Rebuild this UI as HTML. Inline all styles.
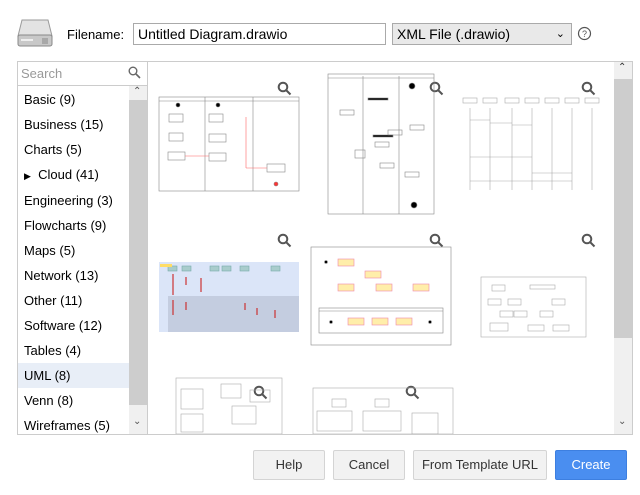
<!DOCTYPE html>
<html><head><style>
*{box-sizing:border-box;margin:0;padding:0}
body{width:640px;height:495px;background:#fff;font-family:"Liberation Sans",sans-serif;font-size:13px;color:#000;position:relative;overflow:hidden}
.a{position:absolute}
.btn{position:absolute;top:450px;height:30px;border:1px solid #d4d4d4;background:#f2f2f2;border-radius:2px;text-align:center;line-height:28px;font-size:13px;color:#333}
.li{position:absolute;left:24px;font-size:13px;color:#000}
</style></head><body>
<svg class="a" style="left:17px;top:18px" width="36" height="30" viewBox="0 0 36 30">
<path d="M5 2 H31 L35 18 H1 Z" fill="#e3e3e3" stroke="#9a9a9a"/>
<rect x="1" y="17" width="34" height="11" rx="2" fill="#c8c8c8" stroke="#888"/>
<rect x="4" y="21" width="12" height="2" fill="#eee"/>
<g stroke="#888"><line x1="26" y1="20" x2="26" y2="26"/><line x1="28" y1="20" x2="28" y2="26"/><line x1="30" y1="20" x2="30" y2="26"/></g>
</svg>
<div class="a" style="left:67px;top:27px">Filename:</div>
<div class="a" style="left:133px;top:23px;width:253px;height:22px;border:1px solid #aaa;padding-left:4px;line-height:20px;font-size:14px">Untitled Diagram.drawio</div>
<div class="a" style="left:392px;top:23px;width:180px;height:22px;border:1px solid #aaa;background:#e9e9e9;padding-left:4px;line-height:20px;font-size:14px">XML File (.drawio)<span style="position:absolute;right:6px;top:0;font-size:11px">&#8964;</span></div>
<svg class="a" style="left:577px;top:26px" width="15" height="15" viewBox="0 0 15 15"><circle cx="7.5" cy="7.5" r="6" fill="none" stroke="#555" stroke-width="1.2"/><text x="7.5" y="11" font-size="9" text-anchor="middle" fill="#555" font-family="Liberation Sans">?</text></svg>

<div class="a" style="left:17px;top:61px;width:616px;height:374px;border:1px solid #ccc"></div>
<div class="a" style="left:147px;top:61px;width:1px;height:374px;background:#ccc"></div>
<div class="a" style="left:18px;top:85px;width:129px;height:1px;background:#ccc"></div>
<div class="a" style="left:21px;top:66px;color:#999">Search</div>
<svg class="a" style="left:128px;top:66px" width="13" height="13" viewBox="0 0 13 13"><circle cx="5" cy="5" r="3.8" fill="none" stroke="#666" stroke-width="1.4"/><line x1="8" y1="8" x2="12" y2="12" stroke="#666" stroke-width="1.6"/></svg>
<div class="a" style="left:129px;top:86px;width:18px;height:348px;background:#f0f0f0"></div>
<div class="a" style="left:129px;top:100px;width:18px;height:305px;background:#cdcdcd"></div>
<div class="a" style="left:133px;top:86px;font-size:10px;color:#555">&#8963;</div>
<div class="a" style="left:133px;top:416px;font-size:10px;color:#555">&#8964;</div>
<div class="a" style="left:18px;top:363px;width:111px;height:25px;background:#e8eef7"></div>
<div class="li" style="top:92px">Basic (9)</div>
<div class="li" style="top:117px">Business (15)</div>
<div class="li" style="top:142px">Charts (5)</div>
<div class="li" style="top:167px"><span style="font-size:9px">&#9654;</span>&nbsp; Cloud (41)</div>
<div class="li" style="top:193px">Engineering (3)</div>
<div class="li" style="top:218px">Flowcharts (9)</div>
<div class="li" style="top:243px">Maps (5)</div>
<div class="li" style="top:268px">Network (13)</div>
<div class="li" style="top:293px">Other (11)</div>
<div class="li" style="top:318px">Software (12)</div>
<div class="li" style="top:343px">Tables (4)</div>
<div class="li" style="top:368px">UML (8)</div>
<div class="li" style="top:393px">Venn (8)</div>
<div class="li" style="top:418px">Wireframes (5)</div>

<div class="a" style="left:614px;top:62px;width:18px;height:372px;background:#f0f0f0"></div>
<div class="a" style="left:614px;top:79px;width:18px;height:259px;background:#cdcdcd"></div>
<div class="a" style="left:618px;top:62px;font-size:10px;color:#333">&#8963;</div>
<div class="a" style="left:618px;top:416px;font-size:10px;color:#555">&#8964;</div>

<svg class="a" style="left:148px;top:62px" width="466" height="372" viewBox="148 62 466 372" fill="none" stroke="#888" stroke-width="0.6">
<g id="m" stroke="#555" stroke-width="2"><circle cx="283" cy="87" r="4.3"/><line x1="286" y1="90" x2="290.5" y2="94.5"/></g>
<use href="#m" x="152"/><use href="#m" x="304"/><use href="#m" y="152"/><use href="#m" x="152" y="152"/><use href="#m" x="304" y="152"/><use href="#m" x="-24" y="304"/><use href="#m" x="128" y="304"/>
<rect x="159" y="97" width="140" height="94"/><line x1="205" y1="97" x2="205" y2="191"/><line x1="253" y1="97" x2="253" y2="191"/><line x1="159" y1="101" x2="299" y2="101"/>
<rect x="169" y="114" width="14" height="8"/><rect x="169" y="133" width="14" height="8"/><rect x="168" y="152" width="17" height="8"/><rect x="209" y="114" width="14" height="8"/><rect x="209" y="134" width="17" height="8"/><rect x="209" y="153" width="17" height="8"/><rect x="267" y="164" width="18" height="8"/>
<g stroke="#f66"><line x1="185" y1="156" x2="209" y2="156"/><line x1="246" y1="117" x2="246" y2="168"/><line x1="246" y1="168" x2="267" y2="168"/></g>
<circle cx="178" cy="105" r="2" fill="#000"/><circle cx="218" cy="105" r="2" fill="#000"/><circle cx="276" cy="184" r="2" fill="#f33"/>
<rect x="328" y="74" width="106" height="140"/><line x1="363" y1="76" x2="363" y2="214"/><line x1="399" y1="76" x2="399" y2="214"/><line x1="328" y1="78" x2="434" y2="78"/>
<rect x="368" y="98" width="20" height="2" fill="#000"/><rect x="373" y="135" width="20" height="2" fill="#000"/>
<circle cx="412" cy="86" r="3" fill="#000"/><circle cx="414" cy="205" r="3" fill="#000"/>
<rect x="340" y="110" width="14" height="5"/><rect x="388" y="130" width="14" height="5"/><rect x="375" y="142" width="14" height="5"/><rect x="380" y="163" width="14" height="5"/><rect x="410" y="125" width="14" height="5"/><rect x="405" y="172" width="14" height="5"/><rect x="355" y="150" width="10" height="8"/>
<g stroke="#aaa"><rect x="463" y="98" width="14" height="5"/><rect x="483" y="98" width="14" height="5"/><rect x="505" y="98" width="14" height="5"/><rect x="525" y="98" width="14" height="5"/><rect x="545" y="98" width="14" height="5"/><rect x="565" y="98" width="14" height="5"/><rect x="585" y="98" width="14" height="5"/>
<line x1="470" y1="108" x2="470" y2="190"/><line x1="490" y1="108" x2="490" y2="190"/><line x1="512" y1="108" x2="512" y2="190"/><line x1="532" y1="108" x2="532" y2="190"/><line x1="552" y1="108" x2="552" y2="190"/><line x1="572" y1="108" x2="572" y2="190"/><line x1="592" y1="108" x2="592" y2="190"/>
<line x1="470" y1="120" x2="490" y2="120"/><line x1="490" y1="123" x2="512" y2="123"/><line x1="512" y1="125" x2="532" y2="125"/><line x1="470" y1="157" x2="532" y2="157"/><line x1="532" y1="173" x2="572" y2="173"/><line x1="470" y1="181" x2="572" y2="181"/></g>
<rect x="159" y="262" width="140" height="70" fill="#dbe5f8" stroke="none"/><rect x="168" y="296" width="131" height="36" fill="#c4cde0" stroke="none"/>
<g fill="#a9cccc" stroke="#7aa"><rect x="168" y="266" width="9" height="5"/><rect x="182" y="266" width="9" height="5"/><rect x="210" y="266" width="9" height="5"/><rect x="222" y="266" width="9" height="5"/><rect x="240" y="266" width="9" height="5"/><rect x="271" y="266" width="9" height="5"/></g>
<rect x="160" y="264" width="12" height="3" fill="#fd6" stroke="none"/>
<g stroke="#c33" stroke-width="1.2"><line x1="173" y1="274" x2="173" y2="295"/><line x1="186" y1="277" x2="186" y2="285"/><line x1="201" y1="278" x2="201" y2="292"/><line x1="173" y1="300" x2="173" y2="315"/><line x1="186" y1="302" x2="186" y2="310"/><line x1="245" y1="303" x2="245" y2="310"/><line x1="257" y1="308" x2="257" y2="315"/><line x1="275" y1="310" x2="275" y2="318"/></g>
<rect x="311" y="247" width="140" height="98"/>
<g fill="#ffeeaa" stroke="#e8a"><rect x="338" y="259" width="16" height="7"/><rect x="365" y="271" width="16" height="7"/><rect x="338" y="284" width="16" height="7"/><rect x="376" y="284" width="16" height="7"/><rect x="413" y="284" width="16" height="7"/><rect x="348" y="318" width="16" height="7"/><rect x="372" y="318" width="16" height="7"/><rect x="396" y="318" width="16" height="7"/></g>
<rect x="319" y="308" width="124" height="25"/><line x1="319" y1="311" x2="443" y2="311"/>
<circle cx="326" cy="262" r="1.5" fill="#000"/><circle cx="331" cy="322" r="1.5" fill="#000"/><circle cx="430" cy="322" r="1.5" fill="#000"/>
<g stroke="#aaa"><rect x="481" y="277" width="105" height="60"/><rect x="492" y="285" width="13" height="6"/><rect x="488" y="299" width="13" height="6"/><rect x="508" y="299" width="13" height="6"/><rect x="500" y="311" width="13" height="6"/><rect x="514" y="311" width="13" height="6"/><rect x="540" y="311" width="13" height="6"/><rect x="552" y="299" width="13" height="6"/><rect x="490" y="323" width="18" height="8"/><rect x="528" y="325" width="16" height="6"/><rect x="553" y="325" width="16" height="6"/><rect x="530" y="285" width="25" height="4"/></g>
<g stroke="#aaa"><rect x="176" y="378" width="106" height="56"/><rect x="181" y="389" width="22" height="20"/><rect x="221" y="384" width="20" height="14"/><rect x="250" y="390" width="20" height="12"/><rect x="181" y="414" width="22" height="18"/><rect x="232" y="406" width="24" height="18"/></g>
<g stroke="#aaa"><rect x="313" y="388" width="140" height="46"/><rect x="332" y="399" width="14" height="8"/><rect x="375" y="399" width="14" height="8"/><rect x="317" y="411" width="35" height="20"/><rect x="363" y="411" width="38" height="20"/><rect x="412" y="413" width="26" height="21"/></g>
</svg>

<div class="btn" style="left:253px;width:72px">Help</div>
<div class="btn" style="left:333px;width:72px">Cancel</div>
<div class="btn" style="left:413px;width:134px">From Template URL</div>
<div class="btn" style="left:555px;width:72px;background:#4a8ef0;border-color:#3d7fe0;color:#fff">Create</div>
</body></html>
